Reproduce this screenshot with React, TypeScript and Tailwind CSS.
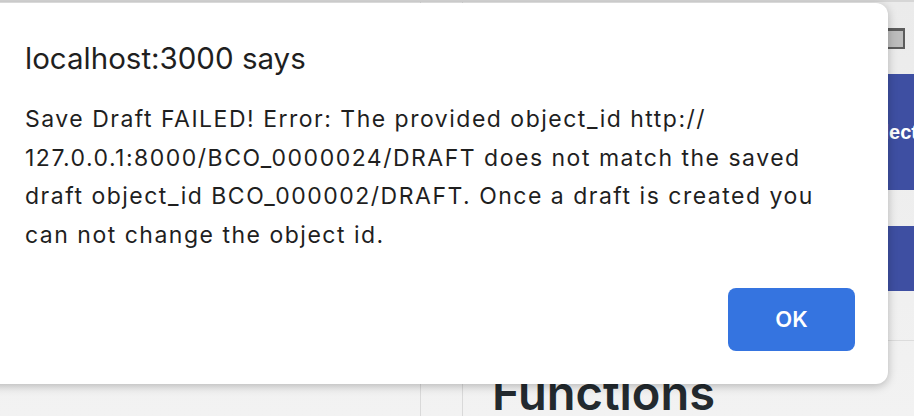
import { useState } from 'react'

const lines = [
  'Save Draft FAILED! Error: The provided object_id http://',
  '127.0.0.1:8000/BCO_0000024/DRAFT does not match the saved',
  'draft object_id BCO_000002/DRAFT. Once a draft is created you',
  'can not change the object id.',
]

function PageBehind() {
  return (
    <div className="flex h-full flex-col bg-gradient-to-b from-[#ebebeb] to-[#f2f2f2]">
      <div className="h-[3px] bg-[#d6d6d6]" />
      <div className="flex flex-1">
        <div className="w-[420px]" />
        <div className="w-[43px] border-x border-[#d9d9d9]" />
        <div className="flex flex-1 flex-col pl-[29px]">
          <div className="flex h-[72px] items-center justify-end pr-[9px]">
            <div className="h-[21px] w-[19px] border-2 border-t-[3px] border-[#5c5c5c] bg-[#bdbdbd]" />
          </div>
          <div className="flex h-[116px] items-center justify-end overflow-hidden bg-[#3e4fa2]">
            <span className="mr-[-4px] font-['Liberation_Sans',sans-serif] text-[20px] font-bold text-white">Select</span>
          </div>
          <div className="h-[36px]" />
          <div className="h-[65px] bg-[#3e4fa2]" />
          <div className="h-[50px] border-b border-[#dcdcdc]" />
          <div className="mt-[28px] font-['Inter',sans-serif] text-[47px] font-semibold leading-none text-[#232a2f]">
            Functions
          </div>
        </div>
      </div>
    </div>
  )
}

export default function App() {
  const [open, setOpen] = useState(true)

  return (
    <div className="relative h-[416px] w-[914px] overflow-hidden">
      <PageBehind />
      {open ? (
        <div className="absolute left-[-20px] top-[3px] flex h-[381px] w-[908px] flex-col rounded-[12px] bg-white pl-[45px] pr-[33px] font-['Inter','Noto_Sans',sans-serif] text-[#1f1f1f] shadow-[0_2px_10px_rgba(0,0,0,0.25)]">
          <div className="mt-[37px] text-[29.5px] leading-[36px]">localhost:3000 says</div>
          <p className="mt-[24px] whitespace-nowrap text-[23px] leading-[38.7px] tracking-[1.5px]">
            {lines.map((line) => (
              <span key={line} className="block">
                {line}
              </span>
            ))}
          </p>
          <div className="mt-auto mb-[33px] flex justify-end">
            <button
              type="button"
              onClick={() => setOpen(false)}
              className="h-[63px] w-[127px] rounded-[8px] bg-[#3574e0] text-[22px] font-semibold text-white"
            >
              OK
            </button>
          </div>
        </div>
      ) : null}
    </div>
  )
}
